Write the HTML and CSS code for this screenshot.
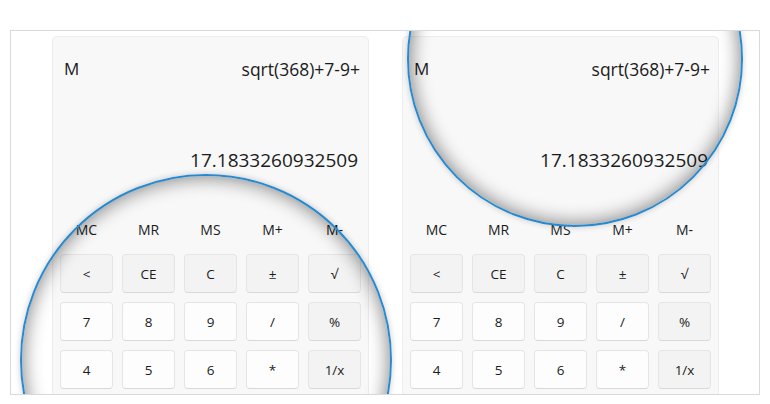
FILE: index.html
```html
<!DOCTYPE html>
<html>
<head>
<meta charset="utf-8">
<link rel="stylesheet" href="styles.css">
</head>
<body>
<div class="frame">
  <div class="panel">
    <div class="expr-row"><span>M</span><span>sqrt(368)+7-9+</span></div>
    <div class="result">17.1833260932509</div>
    <div class="memory"><span>MC</span><span>MR</span><span>MS</span><span>M+</span><span>M-</span></div>
    <div class="keys">
      <div class="key fn">&lt;</div><div class="key fn">CE</div><div class="key fn">C</div><div class="key fn">±</div><div class="key fn">√</div>
      <div class="key">7</div><div class="key">8</div><div class="key">9</div><div class="key">/</div><div class="key fn">%</div>
      <div class="key">4</div><div class="key">5</div><div class="key">6</div><div class="key">*</div><div class="key fn">1/x</div>
    </div>
  </div>
  <div class="panel">
    <div class="expr-row"><span>M</span><span>sqrt(368)+7-9+</span></div>
    <div class="result">17.1833260932509</div>
    <div class="memory"><span>MC</span><span>MR</span><span>MS</span><span>M+</span><span>M-</span></div>
    <div class="keys">
      <div class="key fn">&lt;</div><div class="key fn">CE</div><div class="key fn">C</div><div class="key fn">±</div><div class="key fn">√</div>
      <div class="key">7</div><div class="key">8</div><div class="key">9</div><div class="key">/</div><div class="key fn">%</div>
      <div class="key">4</div><div class="key">5</div><div class="key">6</div><div class="key">*</div><div class="key fn">1/x</div>
    </div>
  </div>
  <div class="lens lens-left"></div>
  <div class="lens lens-right"></div>
</div>
</body>
</html>
```
FILE: styles.css
```css
html, body {
  margin: 0;
  padding: 0;
  background: #ffffff;
}
body {
  font-family: "Open Sans", "Noto Sans", "Liberation Sans", sans-serif;
  color: #1b1b1b;
  padding: 30px 10px 0 10px;
}
.frame {
  position: relative;
  overflow: hidden;
  width: 750px;
  height: 365px;
  box-sizing: border-box;
  border: 1px solid #d9d9d9;
  display: flex;
  gap: 33px;
  padding: 5px 0 0 41px;
}
.panel {
  width: 317px;
  height: 380px;
  flex: none;
  box-sizing: border-box;
  border: 1px solid #ededed;
  border-radius: 5px;
  background: #f8f8f8;
  padding: 0 7px;
  display: flex;
  flex-direction: column;
}
.expr-row {
  display: flex;
  justify-content: space-between;
  padding: 20px 1px 0 4px;
  font-size: 17.5px;
  line-height: 24px;
}
.expr-row span:first-child {
  font-size: 17px;
}
.result {
  margin-top: 65px;
  text-align: right;
  font-size: 19px;
  line-height: 28px;
  padding-right: 3px;
}
.memory {
  margin-top: 46px;
  display: grid;
  grid-template-columns: repeat(5, 53px);
  column-gap: 9px;
  font-size: 14px;
  line-height: 20px;
  text-align: center;
}
.keys {
  margin-top: 14px;
  display: grid;
  grid-template-columns: repeat(5, 53px);
  grid-auto-rows: 39px;
  gap: 9px;
}
.key {
  box-sizing: border-box;
  border: 1px solid #e5e5e5;
  border-bottom-color: #d8d8d8;
  border-radius: 4px;
  background: #fdfdfd;
  display: flex;
  align-items: center;
  justify-content: center;
  font-size: 13.5px;
}
.key.fn {
  background: #f3f3f3;
}
.lens {
  position: absolute;
  box-sizing: border-box;
  border: 2px solid #2789cf;
  border-radius: 50%;
  box-shadow: inset 0 0 18px 2px rgba(0, 0, 0, 0.45), 0 0 6px rgba(0, 0, 0, 0.2);
  pointer-events: none;
}
.lens-left {
  left: 9px;
  top: 143px;
  width: 372px;
  height: 372px;
}
.lens-right {
  left: 396px;
  top: -140px;
  width: 336px;
  height: 336px;
}
```
